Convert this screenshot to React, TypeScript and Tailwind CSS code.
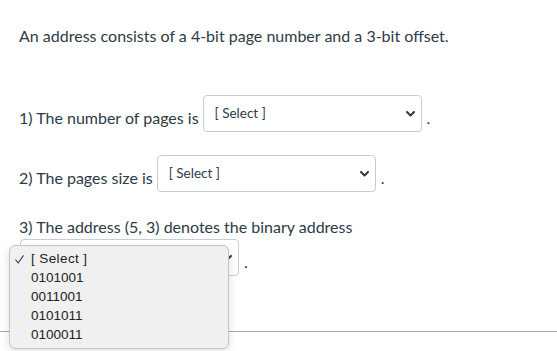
import React from "react";

const OPTIONS = ["0101001", "0011001", "0101011", "0100011"];

function Chevron() {
  return (
    <svg width="9" height="6" viewBox="0 0 9 6" className="shrink-0">
      <path d="M1 1l3.5 3.5L8 1" fill="none" stroke="#2d3b45" strokeWidth="2" strokeLinecap="round" strokeLinejoin="round" />
    </svg>
  );
}

function SelectBox({ hideLabel }: { hideLabel?: boolean }) {
  return (
    <div className="flex h-[37px] w-[219px] items-center justify-between rounded-[4px] border border-[#c7cdd1] bg-white pl-[11px] pr-[6px]">
      <span className={`pt-[1px] text-[13.5px] leading-none text-[#2d3b45] ${hideLabel ? "invisible" : ""}`}>[ Select ]</span>
      <Chevron />
    </div>
  );
}

export default function App() {
  return (
    <div className="min-h-screen w-full bg-white text-[16px] text-[#2d3b45]" style={{ fontFamily: "Lato, 'Noto Sans', sans-serif" }}>
      <div className="px-[19px] pt-[26px]">
        <p className="leading-[20px]">An address consists of a 4-bit page number and a 3-bit offset.</p>

        <div className="mt-[49px] flex items-end gap-[4px]">
          <span className="pb-[4px] leading-[20px]">1) The number of pages is</span>
          <SelectBox />
          <span className="pb-[4px] pl-[1px] leading-[20px]">.</span>
        </div>

        <div className="mt-[23px] flex items-end gap-[4px]">
          <span className="pb-[4px] leading-[20px]">2) The pages size is</span>
          <SelectBox />
          <span className="pb-[4px] pl-[1px] leading-[20px]">.</span>
        </div>

        <p className="mt-[25px] leading-[20px]">3) The address (5, 3) denotes the binary address</p>

        <div className="relative mt-[2px] flex items-end gap-[4px] pl-[1px]">
          {/* label is covered by the open menu */}
          <SelectBox hideLabel />
          <span className="pb-[4px] pl-[1px] leading-[20px]">.</span>

          {/* native dropdown menu, open */}
          <div
            className="absolute left-[-10px] top-[6px] z-10 h-[104px] w-[220px] rounded-[6px] border border-[#c4c4c4] bg-[#f0f0f0] pt-[4px] text-[13.5px] text-[#222] shadow-[0_3px_10px_rgba(0,0,0,0.12)]"
            style={{ fontFamily: "'Liberation Sans', Arial, sans-serif" }}
          >
            <div className="flex h-[19px] items-center">
              <span className="flex w-[21px] justify-start pl-[5px]">
                <svg width="9" height="9" viewBox="0 0 9 9">
                  <path d="M0.8 5l2.4 3L8.3 0.8" fill="none" stroke="#333" strokeWidth="1.1" strokeLinecap="round" strokeLinejoin="round" />
                </svg>
              </span>
              <span className="tracking-[0.4px]">[ Select ]</span>
            </div>
            {OPTIONS.map((o) => (
              <div key={o} className="flex h-[19px] items-center pl-[21px]">
                {o}
              </div>
            ))}
          </div>
        </div>
      </div>

      <div className="mt-[55px] border-t border-[#a9a9a9]" />
    </div>
  );
}
